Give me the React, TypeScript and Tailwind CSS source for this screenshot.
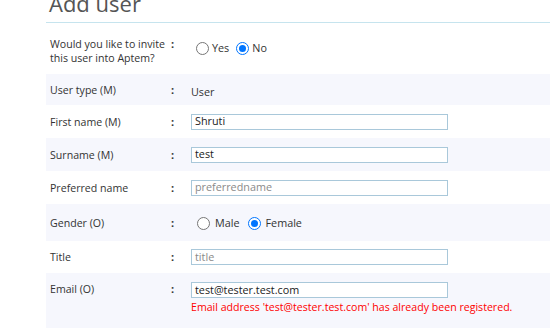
import React from "react";

const FONT = "font-['Open_Sans',sans-serif]";

const Radio = ({ checked }: { checked?: boolean }) =>
  checked ? (
    <span className="inline-flex w-[13px] h-[13px] rounded-full border-[1.5px] border-[#0075ff] items-center justify-center bg-white">
      <span className="w-[7px] h-[7px] rounded-full bg-[#0075ff]" />
    </span>
  ) : (
    <span className="inline-block w-[13px] h-[13px] rounded-full border border-[#767676] bg-white" />
  );

const Field = ({ value, placeholder }: { value?: string; placeholder?: string }) => (
  <div className="w-[257px] h-[16px] border border-[#a9c8da] bg-white px-[3px] flex items-center text-[10.8px] leading-none">
    {value ? <span className="text-[#222]">{value}</span> : <span className="text-[#8a8a8a]">{placeholder}</span>}
  </div>
);

const Row = ({
  label,
  shaded,
  h,
  top,
  children,
}: {
  label: React.ReactNode;
  shaded?: boolean;
  h: string;
  top?: boolean;
  children: React.ReactNode;
}) => (
  <div className={`flex ${top ? "items-start pt-[9px]" : "items-center"} ${h} ${shaded ? "bg-[#f6f7fd]" : "bg-white"}`}>
    <div className="w-[125px] pl-[4px] text-[10.6px] leading-[14px] text-[#333]">{label}</div>
    <div className="w-[20px] text-[11px] leading-[14px] text-[#333] font-bold">:</div>
    <div className="flex-1">{children}</div>
  </div>
);

export default function App() {
  return (
    <div className={`w-[550px] h-[328px] overflow-hidden bg-white ${FONT}`}>
      <div className="ml-[46px]">
        <div className="h-[23px] relative border-b border-[#c6e4ee]">
          <div className="absolute left-[3px] top-[-11px] text-[22px] leading-[28px] text-[#555]">Add user</div>
        </div>
        <div className="flex items-start h-[51px] bg-white pt-[14px]">
          <div className="w-[125px] pl-[4px] text-[10.6px] leading-[14px] text-[#333] whitespace-nowrap">
            Would you like to invite
            <br />
            this user into Aptem?
          </div>
          <div className="w-[20px] text-[11px] leading-[14px] text-[#333] font-bold">:</div>
          <div className="flex items-center gap-[3px] text-[10.8px] leading-[14px] text-[#333] ml-[5px] mt-[4px]">
            <Radio />
            <span className="mr-[4px]">Yes</span>
            <Radio checked />
            <span>No</span>
          </div>
        </div>
        <Row label="User type (M)" shaded h="h-[31px]">
          <span className="text-[10.8px] text-[#333]">User</span>
        </Row>
        <Row label="First name (M)" h="h-[33px]">
          <Field value="Shruti" />
        </Row>
        <Row label="Surname (M)" shaded h="h-[33px]">
          <Field value="test" />
        </Row>
        <Row label="Preferred name" h="h-[33px]">
          <Field placeholder="preferredname" />
        </Row>
        <Row label="Gender (O)" shaded h="h-[37px]">
          <div className="flex items-center gap-[5px] text-[10.8px] text-[#333] ml-[6px] mt-[2px]">
            <Radio />
            <span className="mr-[3px]">Male</span>
            <Radio checked />
            <span>Female</span>
          </div>
        </Row>
        <Row label="Title" h="h-[32px]">
          <Field placeholder="title" />
        </Row>
        <Row label="Email (O)" shaded h="h-[60px]" top>
          <Field value="test@tester.test.com" />
          <div className="text-[10.6px] leading-[14px] text-[#f00] mt-[2px] whitespace-nowrap">
            Email address 'test@tester.test.com' has already been registered.
          </div>
        </Row>
      </div>
    </div>
  );
}
